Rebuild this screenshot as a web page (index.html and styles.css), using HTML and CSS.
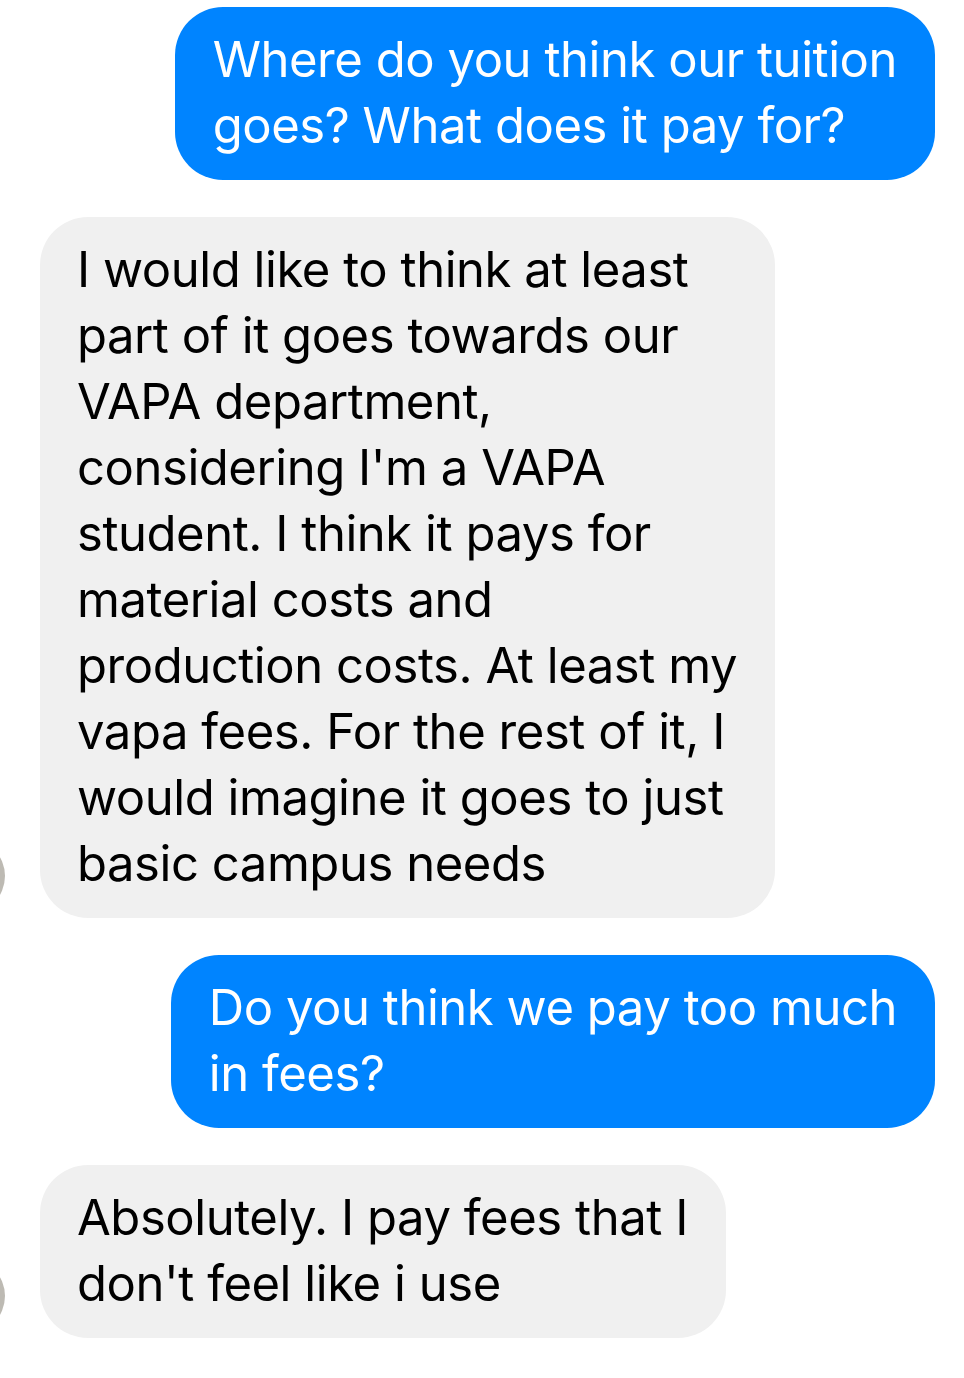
FILE: index.html
```html
<!DOCTYPE html>
<html lang="en">
<head>
  <meta charset="UTF-8">
  <title>Messages</title>
  <link rel="stylesheet" href="styles.css">
</head>
<body>
  <div class="thread">
    <div class="row out">
      <div class="bubble sent">Where do you think our tuition<br>goes? What does it pay for?</div>
    </div>

    <div class="row in">
      <div class="avatar"></div>
      <div class="bubble received">I would like to think at least<br>part of it goes towards our<br>VAPA department,<br>considering I'm a VAPA<br>student. I think it pays for<br>material costs and<br>production costs. At least my<br>vapa fees. For the rest of it, I<br>would imagine it goes to just<br>basic campus needs</div>
    </div>

    <div class="row out">
      <div class="bubble sent">Do you think we pay too much<br>in fees?</div>
    </div>

    <div class="row in">
      <div class="avatar"></div>
      <div class="bubble received">Absolutely. I pay fees that I<br>don't feel like i use</div>
    </div>
  </div>
</body>
</html>
```

FILE: styles.css
```css
body {
  margin: 0;
  background: #ffffff;
  font-family: 'Inter', 'Liberation Sans', sans-serif;
  overflow: hidden;
}

.thread {
  display: flex;
  flex-direction: column;
  gap: 37px;
  padding: 7px 29px 0 0;
}

.row {
  display: flex;
  align-items: flex-end;
}

.row.out {
  justify-content: flex-end;
}

.row.in {
  gap: 35px;
}

.avatar {
  width: 76px;
  height: 76px;
  margin-left: -71px;
  margin-bottom: 4px;
  border-radius: 50%;
  background: #bdbab3;
  flex-shrink: 0;
}

.bubble {
  font-size: 49px;
  line-height: 66px;
  letter-spacing: -0.45px;
  padding: 20px 38px 21px 38px;
  border-radius: 48px;
  white-space: nowrap;
}

.sent {
  background: #0084ff;
  color: #ffffff;
}

.received {
  background: #f0f0f0;
  color: #000000;
  padding-left: 37px;
}
```
